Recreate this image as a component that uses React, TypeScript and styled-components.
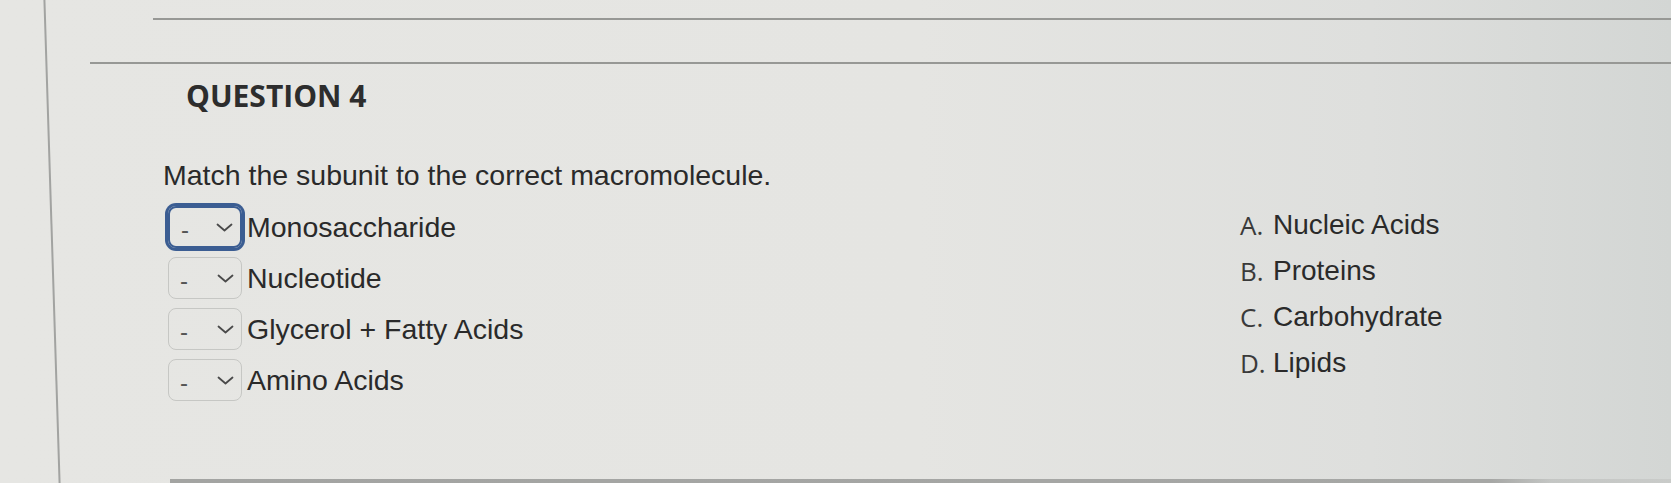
import React from "react";
import styled, { createGlobalStyle } from "styled-components";

const GlobalStyle = createGlobalStyle`
  html, body { margin: 0; padding: 0; }
  body {
    background: linear-gradient(90deg, #e6e6e3 0%, #e5e5e2 55%, #dedfdd 82%, #d3d6d4 100%);
    font-family: "Liberation Sans", Arial, sans-serif;
    color: #2a2a2a;
    overflow: hidden;
  }
`;

const Page = styled.div`
  display: flex;
  width: 1671px;
  height: 483px;
`;

const Divider = styled.div`
  flex: none;
  width: 2px;
  margin-left: 51px;
  background: #a2a3a1;
  transform: skewX(1.8deg);
`;

const Main = styled.main`
  flex: 1;
  display: flex;
  flex-direction: column;
`;

const Rule = styled.div<{ $indent: number; $top: number }>`
  flex: none;
  height: 2px;
  margin: ${(p) => p.$top}px 0 0 ${(p) => p.$indent}px;
  background: #979895;
`;

const Heading = styled.h2`
  margin: 14px 0 0 133px;
  font-family: "Open Sans", "Liberation Sans", sans-serif;
  font-weight: 700;
  font-size: 30px;
  line-height: 36px;
  color: #2d2d2d;
`;

const Prompt = styled.p`
  margin: 45px 0 0 110px;
  font-size: 28.5px;
  line-height: 32px;
`;

const MatchArea = styled.div`
  display: grid;
  grid-template-columns: 1072px auto;
  margin-top: 11px;
  padding-left: 115px;
`;

const Prompts = styled.div`
  display: flex;
  flex-direction: column;
  gap: 9px;
  padding-top: 4px;
`;

const Row = styled.div`
  display: flex;
  align-items: center;
  gap: 5px;
  height: 42px;
`;

const Select = styled.button<{ $focused?: boolean }>`
  box-sizing: border-box;
  width: 74px;
  height: 42px;
  display: flex;
  align-items: center;
  justify-content: space-between;
  padding: 0 7px 0 11px;
  background: transparent;
  border: ${(p) => (p.$focused ? "2px solid #3b5d92" : "1.5px solid #c6c7c4")};
  border-radius: 8px;
  box-shadow: ${(p) => (p.$focused ? "0 0 0 3px #3b5d92" : "none")};
  font: inherit;
  cursor: pointer;
`;

const Dash = styled.span`
  font-size: 24px;
  line-height: 20px;
  color: #555;
  margin-top: 5px;
`;

const Label = styled.span`
  font-size: 28.5px;
  line-height: 32px;
  white-space: nowrap;
`;

const Answers = styled.ol`
  list-style: none;
  margin: 0;
  padding: 0;
`;

const Answer = styled.li`
  display: grid;
  grid-template-columns: 33px auto;
  font-size: 28px;
  line-height: 46px;
  white-space: nowrap;
`;

const Letter = styled.span`
  font-family: "Open Sans", "Liberation Sans", sans-serif;
  font-size: 26px;
  color: #3a3a3a;
`;

const BottomRule = styled.div`
  margin: auto 0 0 117px;
  height: 4px;
  background: linear-gradient(90deg, #a3a4a2 0%, #a6a7a5 88%, #c4c6c4 92%, #c9cbc9 100%);
`;

const Chevron = () => (
  <svg width="17" height="9" viewBox="0 0 17 9" aria-hidden="true">
    <path d="M1.5 1.5 L8.5 7.5 L15.5 1.5" fill="none" stroke="#4a4a4a" strokeWidth="1.8" strokeLinecap="round" strokeLinejoin="round" />
  </svg>
);

const subunits = ["Monosaccharide", "Nucleotide", "Glycerol + Fatty Acids", "Amino Acids"];
const macromolecules = [
  ["A.", "Nucleic Acids"],
  ["B.", "Proteins"],
  ["C.", "Carbohydrate"],
  ["D.", "Lipids"],
];

export default function App() {
  return (
    <>
      <GlobalStyle />
      <Page>
        <Divider />
        <Main>
          <Rule $indent={100} $top={18} />
          <Rule $indent={37} $top={42} />
          <Heading>QUESTION 4</Heading>
          <Prompt>Match the subunit to the correct macromolecule.</Prompt>
          <MatchArea>
            <Prompts>
              {subunits.map((s, i) => (
                <Row key={s}>
                  <Select $focused={i === 0} aria-label={`Match for ${s}`}>
                    <Dash>-</Dash>
                    <Chevron />
                  </Select>
                  <Label>{s}</Label>
                </Row>
              ))}
            </Prompts>
            <Answers>
              {macromolecules.map(([l, t]) => (
                <Answer key={l}>
                  <Letter>{l}</Letter>
                  <span>{t}</span>
                </Answer>
              ))}
            </Answers>
          </MatchArea>
          <BottomRule />
        </Main>
      </Page>
    </>
  );
}
